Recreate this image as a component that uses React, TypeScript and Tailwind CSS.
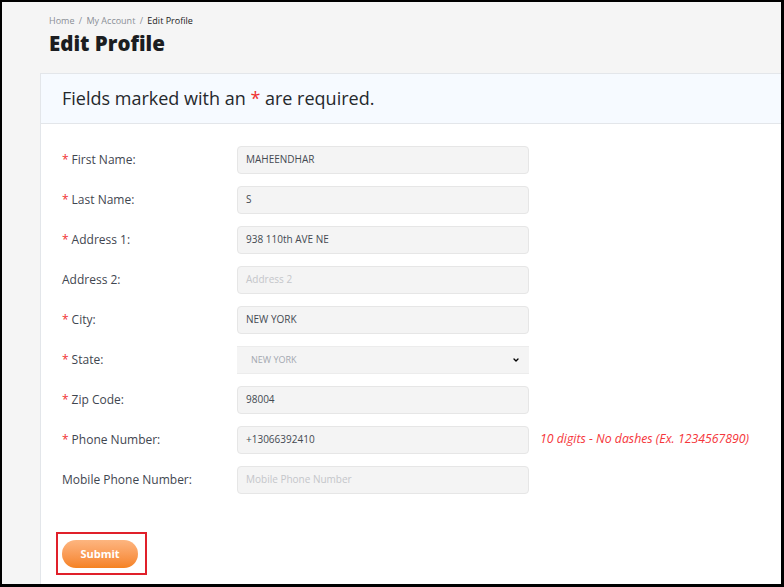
import { ChevronDown } from "lucide-react";

type Field = {
  label: string;
  required?: boolean;
  value?: string;
  placeholder?: string;
  select?: boolean;
  hint?: string;
};

const fields: Field[] = [
  { label: "First Name:", required: true, value: "MAHEENDHAR" },
  { label: "Last Name:", required: true, value: "S" },
  { label: "Address 1:", required: true, value: "938 110th AVE NE" },
  { label: "Address 2:", placeholder: "Address 2" },
  { label: "City:", required: true, value: "NEW YORK" },
  { label: "State:", required: true, value: "NEW YORK", select: true },
  { label: "Zip Code:", required: true, value: "98004" },
  {
    label: "Phone Number:",
    required: true,
    value: "+13066392410",
    hint: "10 digits - No dashes (Ex. 1234567890)",
  },
  { label: "Mobile Phone Number:", placeholder: "Mobile Phone Number" },
];

function FieldRow({ field }: { field: Field }) {
  return (
    <div className="flex h-[28px] items-center">
      <label className="w-[175px] shrink-0 text-[12px] text-[#3f4650]">
        {field.required && <span className="mr-[3px] text-[#f03030]">*</span>}
        {field.label}
      </label>
      {field.select ? (
        <div className="flex h-[28px] w-[292px] items-center justify-between border-y border-[#ececec] bg-[#f4f4f4] pl-[14px] pr-[9px]">
          <span className="text-[9px] text-[#a3a8b0]">{field.value}</span>
          <ChevronDown size={8} strokeWidth={4} className="text-black" />
        </div>
      ) : (
        <div className="flex h-[28px] w-[292px] items-center rounded-[4px] border border-[#e6e6e6] bg-[#f4f4f4] px-[8px] text-[10px]">
          {field.value ? (
            <span className="text-[#444a52]">{field.value}</span>
          ) : (
            <span className="text-[#c4c6ca]">{field.placeholder}</span>
          )}
        </div>
      )}
      {field.hint && (
        <span className="ml-[11px] whitespace-nowrap text-[12.3px] italic text-[#f5363b]">
          {field.hint}
        </span>
      )}
    </div>
  );
}

export default function App() {
  return (
    <div
      className="flex h-[587px] w-[784px] flex-col overflow-hidden border-b-[3px] border-l-2 border-r-[3px] border-t-2 border-black bg-[#f5f5f5]"
      style={{ fontFamily: '"Open Sans", sans-serif' }}
    >
      <div className="pl-[47px] pt-[12px]">
        <p className="text-[9px] text-[#8a8f96]">
          Home <span className="mx-[2px]">/</span> My Account{" "}
          <span className="mx-[2px]">/</span>{" "}
          <span className="text-[#222]">Edit Profile</span>
        </p>
        <h1 className="mt-[1px] text-[20.5px] font-extrabold leading-[28px] text-[#1b1d21]">
          Edit Profile
        </h1>
      </div>

      <div className="ml-[38px] mt-[16px] flex flex-1 flex-col border-l border-t border-[#e3e6ea] bg-white">
        <div className="flex h-[50px] items-center border-b border-[#e3e6ea] bg-[#f6faff] px-[21px]">
          <p className="text-[18px] text-[#25282c]">
            Fields marked with an <span className="text-[#f03030]">*</span> are
            required.
          </p>
        </div>

        <div className="flex flex-col gap-[12px] pl-[21px] pt-[22px]">
          {fields.map((field) => (
            <FieldRow key={field.label} field={field} />
          ))}
        </div>

        <div className="ml-[15px] mt-[38px] self-start border-2 border-[#e0202a] pb-[5px] pl-[4px] pr-[7px] pt-[6px]">
          <button className="h-[28px] w-[76px] rounded-full bg-gradient-to-b from-[#fdb57f] to-[#f5821f] text-[11px] font-bold text-white">
            Submit
          </button>
        </div>
      </div>
    </div>
  );
}
